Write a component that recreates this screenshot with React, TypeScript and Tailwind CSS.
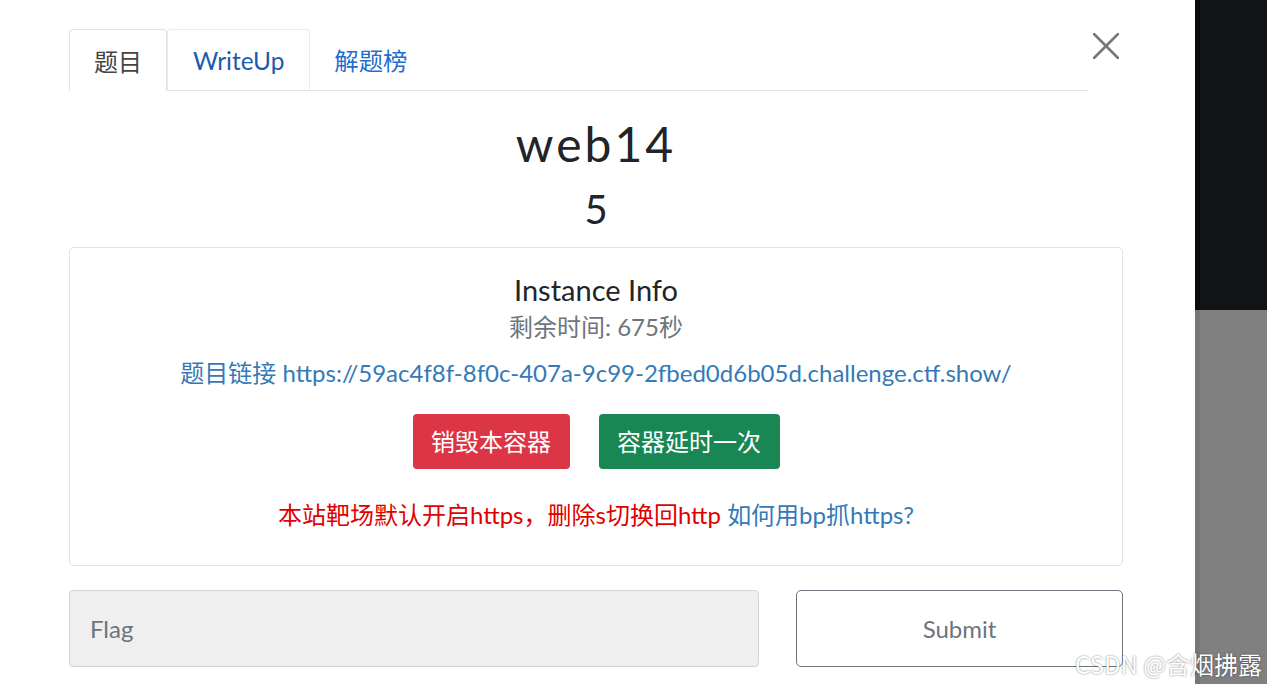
import React from "react";

const font = "font-['Lato','Noto_Sans_CJK_SC',sans-serif]";

function CloseIcon() {
  return (
    <svg width="26" height="26" viewBox="0 0 26 26" className="text-[#777]">
      <path d="M1 1 L25 25 M25 1 L1 25" stroke="currentColor" strokeWidth="2.6" strokeLinecap="round" />
    </svg>
  );
}

export default function App() {
  return (
    <div className={`relative flex h-[684px] w-[1267px] overflow-hidden ${font}`}>
      {/* modal body */}
      <div className="h-full w-[1195px] bg-white pl-[69px] pt-[29px]">
        <div className="flex w-[1054px] flex-col">
          {/* tabs */}
          <div className="flex items-start">
            <div className="flex flex-1 border-b border-[#dee2e6]">
              <div className="-mb-px flex h-[62px] items-center rounded-t-[4px] border border-[#dee2e6] border-b-white bg-white px-6 pt-[3px] text-[24px] text-[#444]">
                题目
              </div>
              <div className="-mb-px flex h-[62px] items-center rounded-t-[4px] border border-[#e9ecef] border-b-[#dee2e6] px-[25px] pt-[3px] text-[24.4px] text-[#1a5bb0]">
                WriteUp
              </div>
              <div className="flex h-[61px] items-center px-[24px] pt-[3px] text-[24.4px] text-[#1f6fcf]">
                解题榜
              </div>
            </div>
            <div className="flex w-[35px] justify-end pt-[4px] pr-[4px]">
              <CloseIcon />
            </div>
          </div>

          {/* title */}
          <div className="mt-[24px] text-center text-[48px] leading-[58px] tracking-[3px] text-[#212529]">
            web14
          </div>
          <div className="mt-[12px] text-center text-[40px] leading-[48px] text-[#212529]">5</div>

          {/* instance card */}
          <div className="mt-[14px] flex flex-col items-center rounded-[5px] border border-[#dee2e6] pt-[25px] pb-[34px]">
            <div className="text-[29px] leading-[34px] text-[#212529]">Instance Info</div>
            <div className="mt-[5px] text-[24px] leading-[30px] text-[#6c757d]">剩余时间: 675秒</div>
            <div className="mt-[15px] text-[24px] leading-[32px] text-[#337ab7]">
              题目链接 https://59ac4f8f-8f0c-407a-9c99-2fbed0d6b05d.challenge.ctf.show/
            </div>
            <div className="mt-[25px] flex gap-[29px]">
              <button className="h-[55px] rounded-[4px] bg-[#dc3545] px-[18.5px] text-[24px] text-white">
                销毁本容器
              </button>
              <button className="h-[55px] rounded-[4px] bg-[#198754] px-[18.5px] text-[24px] text-white">
                容器延时一次
              </button>
            </div>
            <div className="mt-[30px] text-[24px] leading-[32px]">
              <span className="text-[#e00000]">本站靶场默认开启https，删除s切换回http</span>{" "}
              <span className="text-[#337ab7]">如何用bp抓https?</span>
            </div>
          </div>

          {/* flag form */}
          <div className="mt-[24px] flex gap-[37px]">
            <div className="flex h-[77px] w-[690px] items-center rounded-[4px] border border-[#ced4da] bg-[#efefef] px-[20px] text-[24px] text-[#6c757d]">
              Flag
            </div>
            <button className="h-[77px] flex-1 rounded-[5px] border border-[#6c757d] bg-white text-[24px] text-[#6c757d]">
              Submit
            </button>
          </div>
        </div>
      </div>

      {/* backdrop strip */}
      <div className="flex h-full w-[72px] flex-col">
        <div className="h-[310px] border-l-[5px] border-[#0b0b0c] bg-[#121314]" />
        <div className="flex-1 border-l-[5px] border-[#777] bg-[#808080]" />
      </div>

      {/* watermark */}
      <div className="absolute bottom-[5px] right-[5px] font-['Noto_Sans_CJK_SC',sans-serif] text-[24px] leading-[30px] text-white [text-shadow:0_0_2px_rgba(0,0,0,0.55)]">
        CSDN @含烟拂露
      </div>
    </div>
  );
}
